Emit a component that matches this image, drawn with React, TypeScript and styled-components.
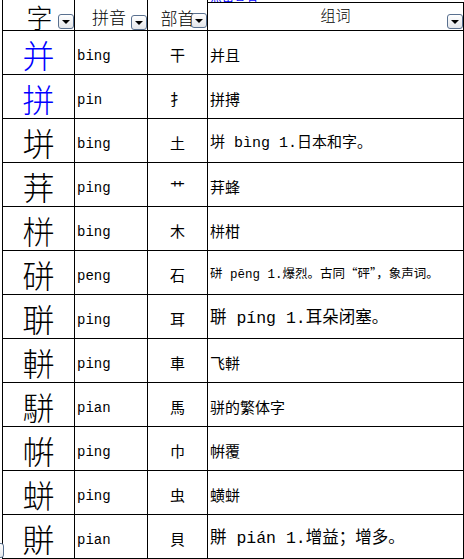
import React from "react";
import styled, { createGlobalStyle } from "styled-components";

const Global = createGlobalStyle`
  html, body { margin: 0; padding: 0; background: #ffffff; }
  body { width: 464px; height: 559px; overflow: hidden; }
`;

const CJK = `"Noto Sans CJK SC", "Noto Sans", sans-serif`;
const MONO = `"Liberation Mono", "Noto Sans CJK SC", monospace`;

const Sheet = styled.div`
  position: relative;
  margin-left: 2px;
  width: 462px;
  display: grid;
  grid-template-columns: 72px 73px 60px 256px;
  grid-template-rows: 31px;
  grid-auto-rows: 44px;
  border-left: 1px solid #000;
`;

const TopLink = styled.div`
  position: absolute;
  left: 207px;
  top: -12px;
  height: 15px;
  overflow: hidden;
  color: #0000ff;
  font-family: ${CJK};
  font-size: 12px;
  text-decoration: underline;
  white-space: nowrap;
`;

const HeadCell = styled.div<{ $top?: boolean; $size: number; $align: string }>`
  position: relative;
  box-sizing: border-box;
  border-right: 1px solid #000;
  border-bottom: 1px solid #000;
  ${(p) => (p.$top ? "border-top: 1px solid #000; margin-top: 2px;" : "")}
  display: flex;
  justify-content: center;
  align-items: ${(p) => p.$align};
  font-family: ${CJK};
  font-size: ${(p) => p.$size}px;
  font-weight: 300;
  line-height: 1;
  color: #000;
`;

const HeadText = styled.span<{ $shift: number; $pad: number }>`
  transform: translate(${(p) => p.$shift}px, ${(p) => p.$pad}px);
`;

const FilterButton = styled.div<{ $bottom: number; $left?: number }>`
  position: absolute;
  ${(p) => (p.$left !== undefined ? `left: ${p.$left}px;` : "right: 0;")}
  bottom: ${(p) => p.$bottom}px;
  width: 16px;
  height: 15px;
  box-sizing: border-box;
  border: 1px solid #59708f;
  border-radius: 3px;
  background: linear-gradient(#ffffff, #e4e6ea);
  display: flex;
  align-items: center;
  justify-content: center;
`;

const Arrow = styled.div`
  width: 0;
  height: 0;
  border-left: 4px solid transparent;
  border-right: 4px solid transparent;
  border-top: 4px solid #000;
  margin-top: 1px;
`;

const Cell = styled.div<{ $align: "left" | "center" }>`
  box-sizing: border-box;
  border-right: 1px solid #000;
  border-bottom: 1px solid #000;
  display: flex;
  align-items: center;
  justify-content: ${(p) => (p.$align === "center" ? "center" : "flex-start")};
  padding-left: ${(p) => (p.$align === "left" ? "2px" : "0")};
  padding-top: 3px;
  color: #000;
  white-space: nowrap;
`;

const BigChar = styled.span<{ $blue?: boolean }>`
  font-family: ${CJK};
  font-size: 32px;
  font-weight: 300;
  line-height: 1;
  color: ${(p) => (p.$blue ? "#0000ff" : "#000")};
`;

const Pinyin = styled.span`
  font-family: ${MONO};
  font-size: 14px;
  line-height: 1;
  padding-top: 3px;
`;

const Radical = styled.span`
  font-family: ${CJK};
  font-size: 15px;
  line-height: 1;
`;

const Words = styled.span<{ $size: number }>`
  font-family: ${CJK};
  font-size: ${(p) => p.$size}px;
  line-height: 1;
`;

const Latin = styled.span<{ $size: number }>`
  font-family: "Liberation Mono", monospace;
  font-size: ${(p) => p.$size}px;
`;

function Mixed({ text, size }: { text: string; size: number }) {
  const parts = text.split(/([\u0020-\u007E\u00C0-\u024F]+)/).filter((s) => s.length > 0);
  return (
    <Words $size={size}>
      {parts.map((p, i) =>
        /^[\u0020-\u007E\u00C0-\u024F]+$/.test(p) ? (
          <Latin key={i} $size={size}>
            {p.replace(/ /g, "\u00a0")}
          </Latin>
        ) : (
          <React.Fragment key={i}>{p}</React.Fragment>
        )
      )}
    </Words>
  );
}

type Row = { ch: string; py: string; rad: string; word: string; blue?: boolean; size?: number };

const rows: Row[] = [
  { ch: "并", py: "bing", rad: "干", word: "并且", blue: true },
  { ch: "拼", py: "pin", rad: "扌", word: "拼搏", blue: true },
  { ch: "垪", py: "bing", rad: "土", word: "垪 bìng 1.日本和字。", size: 15 },
  { ch: "荓", py: "ping", rad: "艹", word: "荓蜂" },
  { ch: "栟", py: "bing", rad: "木", word: "栟柑" },
  { ch: "硑", py: "peng", rad: "石", word: "硑 pēng 1.爆烈。古同“砰”，象声词。", size: 12.5 },
  { ch: "聠", py: "ping", rad: "耳", word: "聠 píng 1.耳朵闭塞。", size: 16.5 },
  { ch: "軿", py: "ping", rad: "車", word: "飞軿" },
  { ch: "駢", py: "pian", rad: "馬", word: "骈的繁体字" },
  { ch: "帲", py: "ping", rad: "巾", word: "帲覆" },
  { ch: "蛢", py: "ping", rad: "虫", word: "蟥蛢" },
  { ch: "賆", py: "pian", rad: "貝", word: "賆 pián 1.增益；增多。", size: 16.5 },
];

export default function App() {
  return (
    <>
      <Global />
      <Sheet>
        <TopLink>点击查看</TopLink>
        <FilterButton $bottom={1} $left={-15}>
          <Arrow />
        </FilterButton>
        <HeadCell $size={26} $align="flex-end">
          <HeadText $shift={1} $pad={0}>字</HeadText>
          <FilterButton $bottom={1}>
            <Arrow />
          </FilterButton>
        </HeadCell>
        <HeadCell $size={17} $align="center">
          <HeadText $shift={-2} $pad={1}>拼音</HeadText>
          <FilterButton $bottom={0}>
            <Arrow />
          </FilterButton>
        </HeadCell>
        <HeadCell $size={17} $align="center">
          <HeadText $shift={0} $pad={2}>部首</HeadText>
          <FilterButton $bottom={2}>
            <Arrow />
          </FilterButton>
        </HeadCell>
        <HeadCell $top $size={15} $align="center">
          <HeadText $shift={0} $pad={-2}>组词</HeadText>
          <FilterButton $bottom={1}>
            <Arrow />
          </FilterButton>
        </HeadCell>
        {rows.map((r) => (
          <React.Fragment key={r.ch}>
            <Cell $align="center">
              <BigChar $blue={r.blue}>{r.ch}</BigChar>
            </Cell>
            <Cell $align="left">
              <Pinyin>{r.py}</Pinyin>
            </Cell>
            <Cell $align="center">
              <Radical>{r.rad}</Radical>
            </Cell>
            <Cell $align="left">
              <Mixed text={r.word} size={r.size ?? 15} />
            </Cell>
          </React.Fragment>
        ))}
      </Sheet>
    </>
  );
}
